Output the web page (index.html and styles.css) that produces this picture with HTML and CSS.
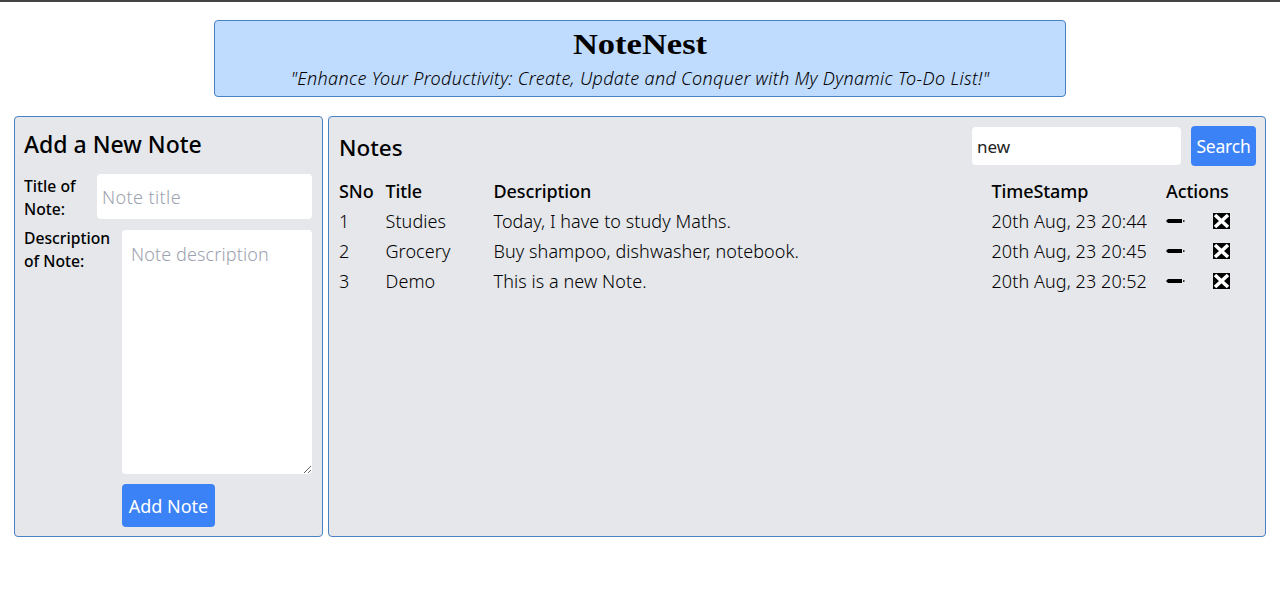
FILE: index.html
```html
<!DOCTYPE html>
<html lang="en">
<head>
<meta charset="utf-8">
<title>NoteNest</title>
<link rel="stylesheet" href="styles.css">
</head>
<body>
<header class="banner">
  <h1 class="brand">NoteNest</h1>
  <p class="tagline">"Enhance Your Productivity: Create, Update and Conquer with My Dynamic To-Do List!"</p>
</header>
<main class="columns">
  <section class="panel add-panel">
    <h2 class="panel-title add-title">Add a New Note</h2>
    <form class="note-form">
      <div class="title-row">
        <label class="field-label title-label" for="t">Title of Note:</label>
        <input class="field title-input" id="t" placeholder="Note title">
      </div>
      <div class="desc-row">
        <label class="field-label desc-label" for="d">Description of Note:</label>
        <div class="desc-col">
          <textarea class="field desc-input" id="d" placeholder="Note description"></textarea>
          <button class="btn add-btn" type="button">Add Note</button>
        </div>
      </div>
    </form>
  </section>
  <section class="panel notes-panel">
    <div class="notes-head">
      <h2 class="panel-title notes-title">Notes</h2>
      <div class="search">
        <input class="field search-input" value="new">
        <button class="btn search-btn" type="button">Search</button>
      </div>
    </div>
    <table class="notes">
      <thead>
        <tr><th class="c-sno">SNo</th><th class="c-title">Title</th><th class="c-desc">Description</th><th class="c-time">TimeStamp</th><th class="c-act">Actions</th></tr>
      </thead>
      <tbody>
        <tr><td>1</td><td>Studies</td><td>Today, I have to study Maths.</td><td>20th Aug, 23 20:44</td><td><div class="actions"><svg class="pencil" viewBox="0 0 19 6"><path d="M0 3 2 1h14v4H2z"/><rect x="17" y="2.3" width="1.5" height="1.5"/></svg><svg class="cross" viewBox="0 0 17 16"><rect width="17" height="16"/><path d="M2 2 15 14M15 2 2 14"/></svg></div></td></tr>
        <tr><td>2</td><td>Grocery</td><td>Buy shampoo, dishwasher, notebook.</td><td>20th Aug, 23 20:45</td><td><div class="actions"><svg class="pencil" viewBox="0 0 19 6"><path d="M0 3 2 1h14v4H2z"/><rect x="17" y="2.3" width="1.5" height="1.5"/></svg><svg class="cross" viewBox="0 0 17 16"><rect width="17" height="16"/><path d="M2 2 15 14M15 2 2 14"/></svg></div></td></tr>
        <tr><td>3</td><td>Demo</td><td>This is a new Note.</td><td>20th Aug, 23 20:52</td><td><div class="actions"><svg class="pencil" viewBox="0 0 19 6"><path d="M0 3 2 1h14v4H2z"/><rect x="17" y="2.3" width="1.5" height="1.5"/></svg><svg class="cross" viewBox="0 0 17 16"><rect width="17" height="16"/><path d="M2 2 15 14M15 2 2 14"/></svg></div></td></tr>
      </tbody>
    </table>
  </section>
</main>
</body>
</html>
```
FILE: styles.css
```css
* { box-sizing: border-box; }
html, body { margin: 0; }
body {
  height: 614px;
  overflow: hidden;
  background: #fff;
  border-top: 2px solid #444;
  color: #000;
  font-family: "Noto Sans", "Open Sans", sans-serif;
  font-size: 16px;
}
.banner {
  width: 852px;
  height: 77px;
  margin: 18px auto 19px;
  background: #bfdbfe;
  border: 1px solid #4a80c4;
  border-radius: 4px;
  text-align: center;
  padding-top: 6px;
}
.brand {
  margin: 0;
  font-family: "Liberation Serif", serif;
  font-size: 29px;
  line-height: 34px;
  font-weight: 700;
  transform: scaleX(1.19);
}
.tagline {
  margin: 4px 0 0;
  font-size: 18px;
  line-height: 26px;
  font-style: italic;
  font-weight: 300;
  letter-spacing: 0.32px;
}
.columns {
  display: flex;
  gap: 5px;
  padding: 0 14px;
}
.panel {
  height: 421px;
  background: #e5e7eb;
  border: 1px solid #4a80c4;
  border-radius: 4px;
  padding: 9px;
}
.add-panel { width: 309px; flex: none; padding-right: 10px; }
.notes-panel { flex: 1; min-width: 0; padding-left: 10px; }
.panel-title {
  margin: 0;
  font-size: 23px;
  line-height: 34px;
  font-weight: 500;
}
.add-title { margin-top: 1px; }
.note-form { margin-top: 13px; }
.title-row { display: flex; gap: 10px; align-items: flex-start; }
.field-label {
  font-size: 15.7px;
  line-height: 23px;
  font-weight: 500;
}
.title-label { width: 63px; flex: none; margin-top: 1px; }
.field {
  display: block;
  background: #fff;
  border: 0;
  border-radius: 4px;
  color: #222;
  font-family: inherit;
  font-size: 18px;
  font-weight: 300;
  outline: none;
}
.field::placeholder { color: #9ca3af; opacity: 1; }
.title-input { flex: 1; min-width: 0; height: 45px; padding: 0 5px; letter-spacing: 0.4px; }
.desc-row { display: flex; gap: 12px; margin-top: 9px; }
.desc-label { width: 86px; flex: none; margin-top: -3px; }
.desc-col { flex: 1; min-width: 0; }
.desc-input { width: 100%; height: 244px; padding: 11px 9px; resize: vertical; line-height: 26px; letter-spacing: 0.12px; }
.btn {
  display: block;
  background: #3b82f6;
  color: #fff;
  border: 0;
  border-radius: 4px;
  font-family: inherit;
  font-size: 18px;
  font-weight: 400;
  padding: 0;
}
.add-btn { width: 93px; height: 43px; margin-top: 10px; }
.notes-head {
  display: flex;
  justify-content: space-between;
  align-items: center;
  height: 40px;
  margin-bottom: 10px;
}
.notes-title { font-size: 22.5px; line-height: 44px; padding-top: 4px; }
.search { display: flex; gap: 10px; align-items: center; }
.search-input { width: 209px; height: 38px; padding: 0 5px; font-size: 17px; font-weight: 400; }
.search-btn { width: 65px; height: 40px; font-size: 17.5px; letter-spacing: -0.2px; }
.notes { width: 100%; border-collapse: collapse; table-layout: fixed; }
.notes th, .notes td {
  padding: 0;
  height: 30px;
  text-align: left;
  font-size: 18px;
  font-weight: 300;
  letter-spacing: 0.08px;
  white-space: nowrap;
}
.notes th { font-weight: 500; letter-spacing: -0.1px; }
.c-sno { width: 46.5px; }
.c-title { width: 108px; }
.c-desc { width: 498px; }
.c-time { width: 174.5px; }
.actions { display: flex; align-items: center; gap: 28px; padding-bottom: 1px; }
.pencil { width: 19px; height: 6px; fill: #000; }
.cross { width: 17px; height: 16px; }
.cross rect { fill: #000; }
.cross path { stroke: #fff; stroke-width: 3.6; fill: none; }
```
